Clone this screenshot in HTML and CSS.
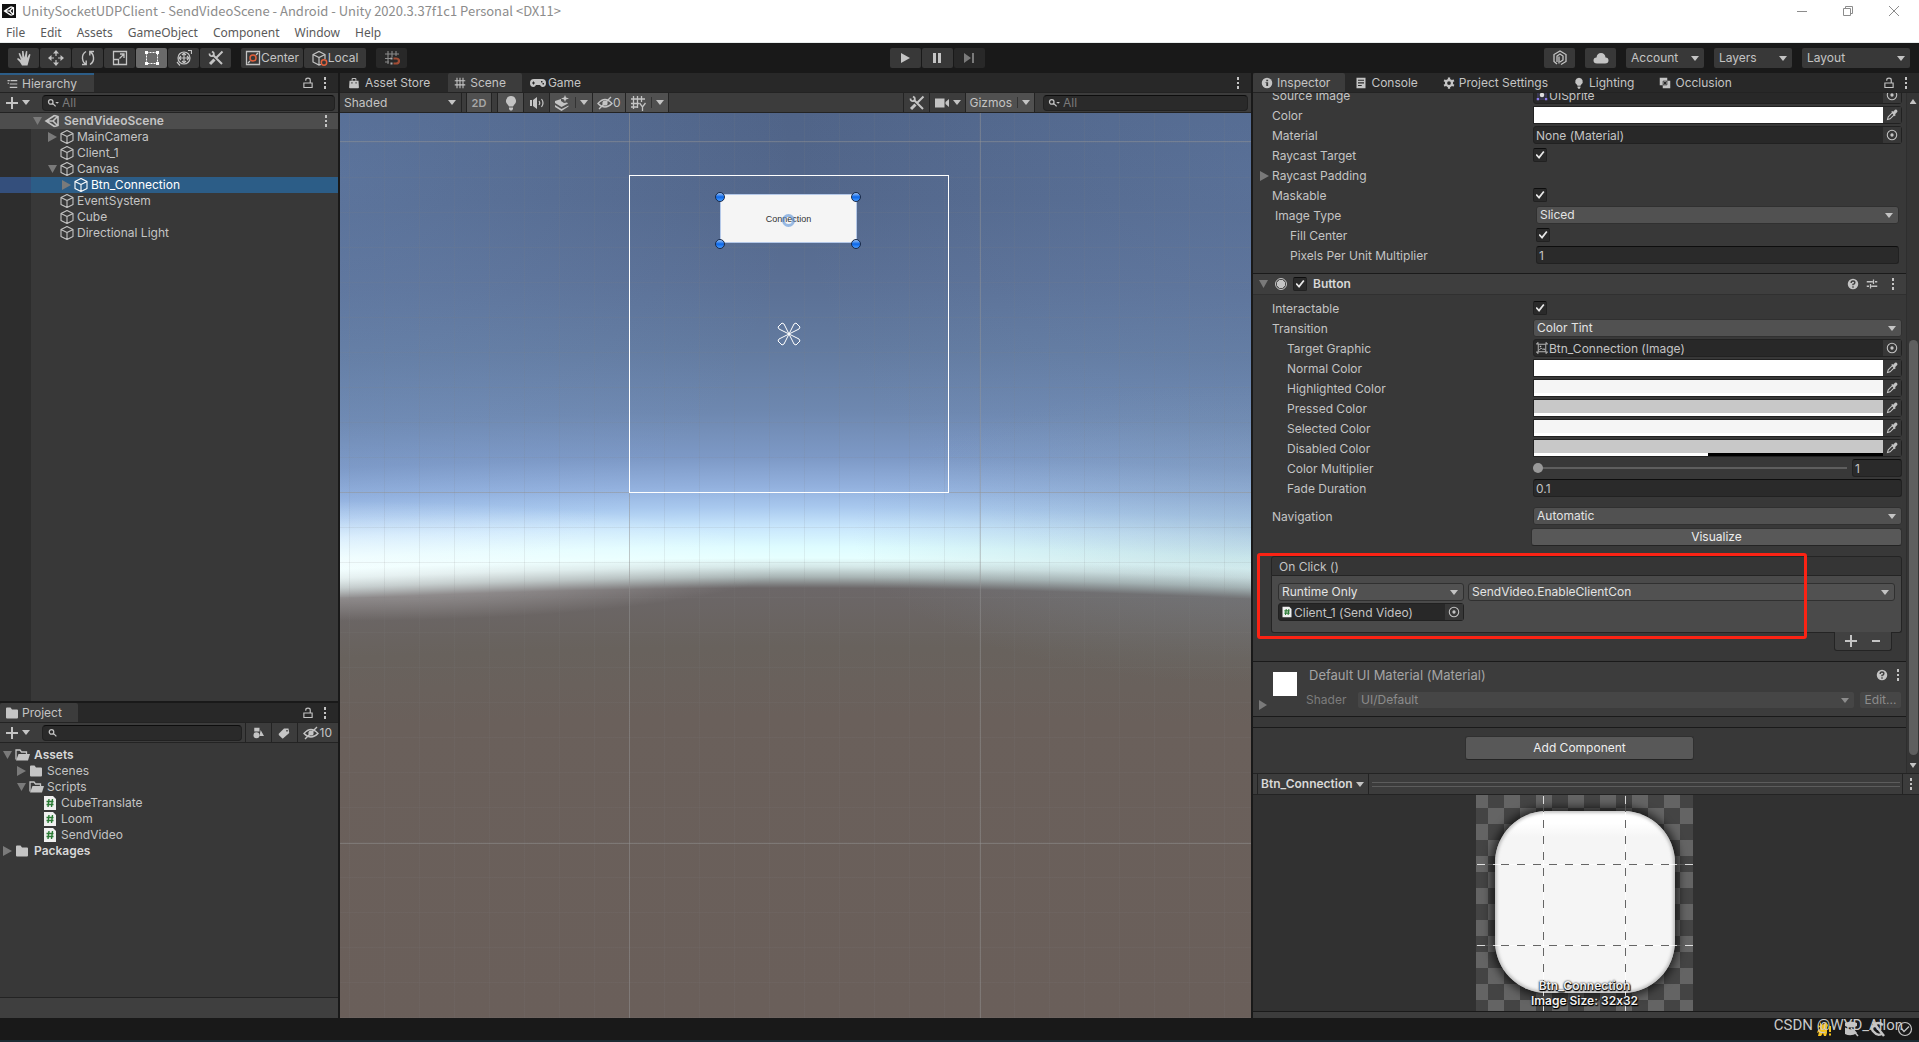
FILE: index.html
```
<!DOCTYPE html>
<html lang="en">

<head>
  <meta charset="UTF-8" />
  <meta name="viewport" content="width=device-width, initial-scale=1.0" />
  <title>UnitySocketUDPClient - SendVideoScene</title>
  <link rel="stylesheet" href="styles.css">
</head>

<body>

  <!-- Icon sheet -->
  <svg class="sheet" aria-hidden="true">
    <symbol id="i-unity" viewBox="0 0 16 16"><path fill="none" stroke="currentColor" stroke-width="1.600" d="M10.500 2.500L2 8l8.500 5.500M10.500 2.500L14 3.500v9l-3.500 1M2 8h7l4-4M9 8l4 4" /></symbol>
    <symbol id="i-cube" viewBox="0 0 16 16"><path fill="none" stroke="currentColor" stroke-width="1.100" stroke-linejoin="round" d="M8 1.500l6 3v7l-6 3-6-3v-7zM2 4.500l6 3 6-3M8 7.500v7" /></symbol>
    <symbol id="i-folder" viewBox="0 0 16 16"><path fill="currentColor" d="M2 3.500q0-1 1-1h3.500l1.500 2h5q1 0 1 1v7q0 1-1 1H3q-1 0-1-1z" /></symbol>
    <symbol id="i-open" viewBox="0 0 16 16"><path fill="none" stroke="currentColor" stroke-width="1.300" d="M2 12.500V3h4l1.500 2h5v2" /><path fill="currentColor" d="M4.500 7H16l-2 6.500H2z" /></symbol>
    <symbol id="i-script" viewBox="0 0 16 16"><path fill="#f0f0f0" d="M2 1h9l3 3v11H2z" /><path fill="none" stroke="#2a7a34" stroke-width="1.400" d="M7 4L6 12M10.500 4l-1 8M4.500 6.500h7M4.500 9.500h7" /></symbol>
    <symbol id="i-list" viewBox="0 0 16 16"><path fill="none" stroke="currentColor" stroke-width="1.400" d="M2 3.500h3M6 3.500h9M5 8h10M5 12.500h10M3 6v2" /></symbol>
    <symbol id="i-lock" viewBox="0 0 16 16"><path fill="none" stroke="currentColor" stroke-width="1.500" d="M2.500 8h11v6h-11zM5 5V4q0-2.500 3-2.500t3 2.500v4" /></symbol>
    <symbol id="i-dots" viewBox="0 0 16 16"><path fill="currentColor" d="M7 2h2v3H7zM7 7h2v2H7zM7 11h2v3H7z" /></symbol>
    <symbol id="i-plus" viewBox="0 0 16 16"><path fill="currentColor" d="M7 2h2v5h5v2H9v5H7V9H2V7h5z" /></symbol>
    <symbol id="i-minus" viewBox="0 0 16 16"><path fill="currentColor" d="M4 7h8v2H4z" /></symbol>
    <symbol id="i-search" viewBox="0 0 16 16"><path fill="none" stroke="currentColor" stroke-width="1.700" d="M9 6.500a3 3 0 1 1-6 0a3 3 0 1 1 6 0M8.500 8.500l4 4" /></symbol>
    <symbol id="i-search-menu" viewBox="0 0 16 16"><path fill="none" stroke="currentColor" stroke-width="1.700" d="M8 6.500a3 3 0 1 1-6 0a3 3 0 1 1 6 0M7.500 8.500l4 4" /><path fill="currentColor" d="M11 6.500h5L13.500 9z" /></symbol>
    <symbol id="i-bag" viewBox="0 0 16 16"><path fill="currentColor" d="M2 5h12l.5 9q0 1-1 1h-11q-1 0-1-1z" /><path fill="none" stroke="currentColor" stroke-width="1.300" d="M5.500 5V2h5v3" /><path fill="#282828" d="M4.500 7H6v1.500H4.500zM10 7h1.500v1.500H10z" /></symbol>
    <symbol id="i-hash" viewBox="0 0 16 16"><path fill="none" stroke="currentColor" stroke-width="1.400" d="M4 1v14M8 1v14M12 1v14M1 5h14M1 10.500h14" /></symbol>
    <symbol id="i-pad" viewBox="0 0 16 16"><path fill="currentColor" fill-rule="evenodd" d="M4 4h8q4 0 4 4t-3.500 4q-1.500 0-2.500-2H6q-1 2-2.500 2Q0 12 0 8t4-4zM3 6.500v1H2v1h1v1h1v-1h1v-1H4v-1zM11 6v1.500h1.500V6zM12.500 8v1.500H14V8z" /></symbol>
    <symbol id="i-bulb" viewBox="0 0 16 16"><path fill="currentColor" d="M8 1a5 5 0 0 1 3 9l-1 1.500H6L5 10a5 5 0 0 1 3-9zM6 12.500h4V14l-1 1.500H7L6 14z" /></symbol>
    <symbol id="i-sound" viewBox="0 0 16 16"><path fill="currentColor" d="M1 5h2v6H1zM4 5l4-3v12l-4-3z" /><path fill="none" stroke="currentColor" stroke-width="1.200" d="M10 6q1.500 2 0 4M12.500 4q3 4 0 8" /></symbol>
    <symbol id="i-fx" viewBox="0 0 16 16"><path fill="currentColor" d="M1 6l6-2v2l3 2 3-.5 1 1L7.500 12 1 8zM1 10l6.500 4 7-3.500v1L7.500 16 1 12zM11 0l1 2.500L15 3.500l-3 1L11 7l-1-2.500-3-1 3-1z" /></symbol>
    <symbol id="i-eye" viewBox="0 0 16 16"><path fill="none" stroke="currentColor" stroke-width="1.400" d="M1 8.500q7-8 14 0q-7 7-14 0zM2 14L14 2" /><circle cx="8" cy="8" r="2.600" fill="currentColor" /></symbol>
    <symbol id="i-gridy" viewBox="0 0 16 16"><path fill="none" stroke="currentColor" stroke-width="1.300" d="M3.500 1v13M7.500 1v12M11.500 1v6M1 4h14M1 8.500h8M1 12h6M9.500 8l3 4 3-4M12.500 12v4" /></symbol>
    <symbol id="i-tools" viewBox="0 0 16 16"><path fill="none" stroke="currentColor" stroke-width="2" d="M5 5l9 9M8.500 7.500L14.500 1.500" /><path fill="none" stroke="currentColor" stroke-width="1.800" d="M1.500 3.500q0 3 3 2.500 2-1 1-3.500L4 1.500" /><path fill="none" stroke="currentColor" stroke-width="3" d="M2 14l4.500-4.500" /></symbol>
    <symbol id="i-camera" viewBox="0 0 16 16"><path fill="currentColor" d="M1 3.500h9.500v9H1zM11.500 7l3.500-3v8l-3.500-3z" /></symbol>
    <symbol id="i-info" viewBox="0 0 16 16"><circle cx="8" cy="8" r="7" fill="currentColor" /><path fill="#3c3c3c" d="M7 3.500h2.500v2H7zM6 7h3.500v5H7V8H6z" /></symbol>
    <symbol id="i-console" viewBox="0 0 16 16"><path fill="currentColor" fill-rule="evenodd" d="M2 1h12v14H2zM4 3.500V5h8V3.500zM4 7v1.500h8V7zM4 10.500V12h5v-1.500z" /></symbol>
    <symbol id="i-gear" viewBox="0 0 16 16"><circle cx="8" cy="8" r="4" fill="none" stroke="currentColor" stroke-width="3" /><path stroke="currentColor" stroke-width="3" d="M8 .5v3M8 12.500v3M1.500 4.300l2.600 1.500M11.900 10.200l2.600 1.500M1.500 11.700l2.600-1.500M11.900 5.800l2.600-1.500" /></symbol>
    <symbol id="i-occl" viewBox="0 0 16 16"><path fill="currentColor" fill-rule="evenodd" d="M1 1h10v4h4v10H5v-4H1zM6.500 6.500v3h3v-3z" /><path fill="none" stroke="#282828" d="M5.500 11V5.500H11M5.500 10.500h5v-5" /></symbol>
    <symbol id="i-help" viewBox="0 0 16 16"><circle cx="8" cy="8" r="7" fill="currentColor" /><path fill="none" stroke="#3c3c3c" stroke-width="1.800" d="M5.500 6.500Q5.500 4 8 4t2.500 2.300Q10.500 8 8 8.500v1.300M8 11v2" /></symbol>
    <symbol id="i-preset" viewBox="0 0 16 16"><path fill="none" stroke="currentColor" stroke-width="1.700" d="M1 5h8M12 5h3M10 2v6M1 11h3M7 11h8M6 8v6" /></symbol>
    <symbol id="i-pick" viewBox="0 0 16 16"><circle cx="8" cy="8" r="6.300" fill="none" stroke="currentColor" stroke-width="1.400" /><circle cx="8" cy="8" r="2.200" fill="currentColor" /></symbol>
    <symbol id="i-dropper" viewBox="0 0 16 16"><path fill="none" stroke="currentColor" stroke-width="1.400" d="M2 14l1-3.500 5.500-5.500 2.500 2.500L5.500 13z" /><path fill="currentColor" d="M7 3.500l1.500-1 1 1L12 1q2-1 3 1t-1 3l-2 2 1 1-1.500 1.500z" /></symbol>
    <symbol id="i-sprite" viewBox="0 0 16 16"><rect x="2.500" y="2.500" width="11" height="11" fill="#30303c" stroke="#4c4a78" /><path fill="#8c7cf0" d="M1 1h3v3H1zM12 1h3v3h-3zM1 12h3v3H1zM12 12h3v3h-3z" /><circle cx="8" cy="8" r="3" fill="#ddd" /></symbol>
    <symbol id="i-image" viewBox="0 0 16 16"><path fill="none" stroke="currentColor" stroke-width="1.200" d="M3 3h10v10H3zM0 2.500h3M2.500 0v3M13 2.500h3M13.500 0v3M0 13.500h3M2.500 13v3M13 13.500h3M13.500 13v3M4 11l3-3 2 2 2-1 1 2" /><path fill="currentColor" d="M5 5h2v2H5z" /></symbol>
    <symbol id="i-hand" viewBox="0 0 16 16"><path fill="currentColor" d="M6 15.500Q5 12.500 1 9l1-1 3 2L2.500 3.500l1.500-.5 2.300 5L6 1h1.500l1 6.500L10 1l1.300.3L11 8l2.200-4 1.300.5L13 10l-1.500 5.500z" /></symbol>
    <symbol id="i-move" viewBox="0 0 16 16"><path fill="none" stroke="currentColor" stroke-width="1.200" d="M8 2v4M8 10v4M2 8h4M10 8h4" /><path fill="currentColor" d="M8 0l3 3.500H5zM8 16l3-3.500H5zM0 8l3.500-3v6zM16 8l-3.500-3v6z" /></symbol>
    <symbol id="i-rotate" viewBox="0 0 16 16"><path fill="none" stroke="currentColor" stroke-width="1.400" d="M6 1.500Q2 4 2.500 8.500T6 14M2 14.500h4.200V10.500M10 14.500q4-2.500 3.500-7T10 2M14 1.500H9.800v4" /></symbol>
    <symbol id="i-scale" viewBox="0 0 16 16"><path fill="none" stroke="currentColor" stroke-width="1.300" d="M1.500 1.500h13v13h-13zM1.500 9.500h5v5M7.500 8.500L12 4M8 4h4v4" /></symbol>
    <symbol id="i-rect" viewBox="0 0 16 16"><path fill="none" stroke="currentColor" stroke-dasharray="2 1" d="M2.500 2.500h11v11h-11z" /><path fill="currentColor" d="M1 1h3v3H1zM12 1h3v3h-3zM1 12h3v3H1zM12 12h3v3h-3z" /></symbol>
    <symbol id="i-transform" viewBox="0 0 16 16"><circle cx="8" cy="8" r="6" fill="none" stroke="currentColor" stroke-width="1.200" /><path fill="none" stroke="currentColor" stroke-width="1.200" d="M8 3v10M3 8h10M6 5l2-2 2 2M6 11l2 2 2-2M5 6L3 8l2 2M11 6l2 2-2 2M12 .5h3.500V4M1 12l3 3.500" /></symbol>
    <symbol id="i-center" viewBox="0 0 16 16"><path fill="none" stroke="currentColor" stroke-width="1.300" d="M1.500 1.500h13v13h-13zM3 13l2-2M11 5l2-2" /><circle cx="8" cy="8" r="3" fill="none" stroke="#e2613d" stroke-width="1.500" /></symbol>
    <symbol id="i-local" viewBox="0 0 16 16"><path fill="none" stroke="currentColor" stroke-width="1.200" d="M9 14.500L7 15l-6-3V4.500l6-3 6 3V9M1 4.500l6 3 6-3M7 7.500V15" /><circle cx="12" cy="12.500" r="2.700" fill="none" stroke="#e2613d" stroke-width="1.500" /></symbol>
    <symbol id="i-snap" viewBox="0 0 16 16"><path fill="none" stroke="#8a8a8a" stroke-width="1.100" d="M4 1v13M8 1v6M12 1v5M1 4h14M1 8.500h6M1 12h4" /><path fill="none" stroke="#a04c34" stroke-width="2.200" d="M9.500 8.500H12q3 0 3 2.500t-3 2.500H9.500" /><path fill="#aaa" d="M6.500 7.500h2v2h-2zM6.500 12.500h2v2h-2z" /></symbol>
    <symbol id="i-play" viewBox="0 0 16 16"><path fill="currentColor" d="M4 3l9 5-9 5z" /></symbol>
    <symbol id="i-pause" viewBox="0 0 16 16"><path fill="currentColor" d="M4 3h3v10H4zM9 3h3v10H9z" /></symbol>
    <symbol id="i-step" viewBox="0 0 16 16"><path fill="currentColor" d="M3 3l7 5-7 5zM11 3h2v10h-2z" /></symbol>
    <symbol id="i-collab" viewBox="0 0 16 16"><path fill="none" stroke="currentColor" stroke-width="1.300" d="M5 14l-3-2.500v-7L8 1l6 3.500v7L9 14.500M7 13.500v-7M5 12V6l3-2 3 2v4l-3 2" /></symbol>
    <symbol id="i-cloud" viewBox="0 0 16 16"><path fill="currentColor" d="M4 13.500q-3.500 0-3.500-3T3.500 7.500Q4 3 8 3t4.500 4.500q3 0 3 3t-3.500 3z" /></symbol>
    <symbol id="i-shapes" viewBox="0 0 16 16"><path fill="currentColor" d="M3 1h7v5H3zM11.500 4l4.500 8h-6z" /><circle cx="6" cy="11" r="4" fill="currentColor" /></symbol>
    <symbol id="i-tag" viewBox="0 0 16 16"><path fill="currentColor" fill-rule="evenodd" d="M1 9l7-7 6 0 1 6-8 7q-1 .5-1.500 0L1 10.500zM11 4v2h2V4z" /></symbol>
    <symbol id="i-bug" viewBox="0 0 16 16"><path fill="#f7c31e" d="M4 1l2 3 2-1 2-2 2 3-1 3v5l-1 3H8l-1-3-2 3H2l1-4-2 1 1-3 2-1V6L2 7V4l2 1zM13 5h2v6h-2zM13 12.500h2v2h-2z" /></symbol>
    <symbol id="i-cache" viewBox="0 0 16 16"><path fill="currentColor" d="M2 2q6-3 12 0v3Q8 8 2 5zM2 6.500q6 3 9 1.500l3 4q-6 4-12 1z" /><path stroke="currentColor" stroke-width="1.500" d="M8 7l7 8" /></symbol>
    <symbol id="i-bake" viewBox="0 0 16 16"><path fill="none" stroke="currentColor" stroke-width="2.500" d="M13 4Q8 0 4 4t0 7q4 5 9 1M3 1l11 14" /></symbol>
    <symbol id="i-done" viewBox="0 0 16 16"><circle cx="8" cy="8" r="6.500" fill="none" stroke="currentColor" stroke-width="1.200" /><path fill="none" stroke="currentColor" stroke-width="1.300" d="M4.500 7.500L7 10.500 12 5.500" /></symbol>
    <symbol id="i-min" viewBox="0 0 12 12"><path stroke="currentColor" d="M1 6.500h10" /></symbol>
    <symbol id="i-restore" viewBox="0 0 12 12"><path fill="none" stroke="currentColor" d="M1.500 3.500h7v7h-7zM3.500 3.500v-2h7v7h-2" /></symbol>
    <symbol id="i-close" viewBox="0 0 12 12"><path stroke="currentColor" d="M1 1l10 10M11 1L1 11" /></symbol>
  </svg>

  <header class="titlebar">
    <span class="app-icon"><svg class="icon small"><use href="#i-unity" /></svg></span>
    <h1>UnitySocketUDPClient - SendVideoScene - Android - Unity 2020.3.37f1c1 Personal &lt;DX11&gt;</h1>
    <div class="window-buttons">
      <button aria-label="Minimize"><svg><use href="#i-min" /></svg></button>
      <button aria-label="Restore"><svg><use href="#i-restore" /></svg></button>
      <button aria-label="Close"><svg><use href="#i-close" /></svg></button>
    </div>
  </header>

  <nav class="menubar">
    <a href="#">File</a>
    <a href="#">Edit</a>
    <a href="#">Assets</a>
    <a href="#">GameObject</a>
    <a href="#">Component</a>
    <a href="#">Window</a>
    <a href="#">Help</a>
  </nav>

  <div class="toolbar">
    <div class="toolbar-side">
      <div class="btn-group">
        <button class="tool" aria-label="Hand"><svg class="icon"><use href="#i-hand" /></svg></button>
        <button class="tool" aria-label="Move"><svg class="icon"><use href="#i-move" /></svg></button>
        <button class="tool" aria-label="Rotate"><svg class="icon"><use href="#i-rotate" /></svg></button>
        <button class="tool" aria-label="Scale"><svg class="icon"><use href="#i-scale" /></svg></button>
        <button class="tool active" aria-label="Rect"><svg class="icon"><use href="#i-rect" /></svg></button>
        <button class="tool" aria-label="Transform"><svg class="icon"><use href="#i-transform" /></svg></button>
        <button class="tool" aria-label="Custom tools"><svg class="icon"><use href="#i-tools" /></svg></button>
      </div>
      <div class="btn-group">
        <button class="tool wide"><svg class="icon"><use href="#i-center" /></svg>Center</button>
        <button class="tool wide"><svg class="icon"><use href="#i-local" /></svg>Local</button>
      </div>
      <button class="tool off" aria-label="Grid snapping" disabled><svg class="icon"><use href="#i-snap" /></svg></button>
    </div>
    <div class="btn-group play-controls">
      <button class="tool" aria-label="Play"><svg class="icon"><use href="#i-play" /></svg></button>
      <button class="tool" aria-label="Pause"><svg class="icon"><use href="#i-pause" /></svg></button>
      <button class="tool off" aria-label="Step" disabled><svg class="icon"><use href="#i-step" /></svg></button>
    </div>
    <div class="toolbar-side end">
      <button class="tool" aria-label="Collaborate"><svg class="icon"><use href="#i-collab" /></svg></button>
      <button class="tool" aria-label="Cloud"><svg class="icon"><use href="#i-cloud" /></svg></button>
      <button class="menu-btn">Account</button>
      <button class="menu-btn">Layers</button>
      <button class="menu-btn layout">Layout</button>
    </div>
  </div>

  <main>
    <div class="left-column">
      <section class="panel hierarchy">
        <div class="tabs">
          <button class="tab current focused"><svg class="icon small"><use href="#i-list" /></svg>Hierarchy</button>
          <div class="tab-tools">
            <button aria-label="Lock"><svg class="icon small"><use href="#i-lock" /></svg></button>
            <button aria-label="More"><svg class="icon"><use href="#i-dots" /></svg></button>
          </div>
        </div>
        <div class="strip">
          <button class="add" aria-label="Create"><svg class="icon"><use href="#i-plus" /></svg></button>
          <div class="search">
            <svg class="icon small"><use href="#i-search-menu" /></svg>
            <input type="text" placeholder="All" aria-label="Search hierarchy" />
          </div>
        </div>
        <ul class="tree scene-tree">
          <li class="scene-row"><i class="fold open"></i><svg class="icon"><use href="#i-unity" /></svg><b>SendVideoScene</b><svg class="icon"><use href="#i-dots" /></svg></li>
          <li class="d1"><i class="fold"></i><svg class="icon"><use href="#i-cube" /></svg>MainCamera</li>
          <li class="d1"><i class="fold none"></i><svg class="icon"><use href="#i-cube" /></svg>Client_1</li>
          <li class="d1"><i class="fold open"></i><svg class="icon"><use href="#i-cube" /></svg>Canvas</li>
          <li class="d2 selected"><i class="fold"></i><svg class="icon"><use href="#i-cube" /></svg>Btn_Connection</li>
          <li class="d1"><i class="fold none"></i><svg class="icon"><use href="#i-cube" /></svg>EventSystem</li>
          <li class="d1"><i class="fold none"></i><svg class="icon"><use href="#i-cube" /></svg>Cube</li>
          <li class="d1"><i class="fold none"></i><svg class="icon"><use href="#i-cube" /></svg>Directional Light</li>
        </ul>
      </section>

      <section class="panel project">
        <div class="tabs">
          <button class="tab current"><svg class="icon"><use href="#i-folder" /></svg>Project</button>
          <div class="tab-tools">
            <button aria-label="Lock"><svg class="icon small"><use href="#i-lock" /></svg></button>
            <button aria-label="More"><svg class="icon"><use href="#i-dots" /></svg></button>
          </div>
        </div>
        <div class="strip">
          <button class="add" aria-label="Create"><svg class="icon"><use href="#i-plus" /></svg></button>
          <div class="search">
            <svg class="icon small"><use href="#i-search" /></svg>
            <input type="text" aria-label="Search project" />
          </div>
          <button class="strip-btn" aria-label="Filter by type"><svg class="icon small"><use href="#i-shapes" /></svg></button>
          <button class="strip-btn" aria-label="Filter by label"><svg class="icon small"><use href="#i-tag" /></svg></button>
          <button class="strip-btn hidden-count"><svg class="icon"><use href="#i-eye" /></svg>10</button>
        </div>
        <ul class="tree asset-tree">
          <li><i class="fold open"></i><svg class="icon"><use href="#i-open" /></svg><b>Assets</b></li>
          <li class="d1"><i class="fold"></i><svg class="icon"><use href="#i-folder" /></svg>Scenes</li>
          <li class="d1"><i class="fold open"></i><svg class="icon"><use href="#i-open" /></svg>Scripts</li>
          <li class="d2"><i class="fold none"></i><svg class="icon"><use href="#i-script" /></svg>CubeTranslate</li>
          <li class="d2"><i class="fold none"></i><svg class="icon"><use href="#i-script" /></svg>Loom</li>
          <li class="d2"><i class="fold none"></i><svg class="icon"><use href="#i-script" /></svg>SendVideo</li>
          <li><i class="fold"></i><svg class="icon"><use href="#i-folder" /></svg><b>Packages</b></li>
        </ul>
        <div class="project-footer"></div>
      </section>
    </div>

    <section class="panel scene">
      <div class="tabs">
        <button class="tab store"><svg class="icon small"><use href="#i-bag" /></svg>Asset Store</button>
        <button class="tab current scene-tab"><svg class="icon small"><use href="#i-hash" /></svg>Scene</button>
        <button class="tab game-tab"><svg class="icon"><use href="#i-pad" /></svg>Game</button>
        <div class="tab-tools">
          <button aria-label="More"><svg class="icon"><use href="#i-dots" /></svg></button>
        </div>
      </div>
      <div class="strip scene-strip">
        <div class="strip-items">
          <button class="shading">Shaded</button>
          <button class="strip-btn on mode">2D</button>
          <button class="strip-btn on" aria-label="Lighting"><svg class="icon"><use href="#i-bulb" /></svg></button>
          <button class="strip-btn" aria-label="Audio"><svg class="icon"><use href="#i-sound" /></svg></button>
          <button class="strip-btn on split" aria-label="Effects"><svg class="icon"><use href="#i-fx" /></svg></button>
          <button class="strip-btn on eye"><svg class="icon"><use href="#i-eye" /></svg>0</button>
          <button class="strip-btn on split" aria-label="Grid"><svg class="icon"><use href="#i-gridy" /></svg></button>
        </div>
        <div class="strip-items right">
          <button class="strip-btn" aria-label="Tools"><svg class="icon"><use href="#i-tools" /></svg></button>
          <button class="strip-btn drop" aria-label="Camera"><svg class="icon"><use href="#i-camera" /></svg></button>
          <button class="strip-btn on split gizmos">Gizmos</button>
          <div class="search">
            <svg class="icon small"><use href="#i-search-menu" /></svg>
            <input type="text" placeholder="All" aria-label="Search scene" />
          </div>
        </div>
      </div>
      <div class="viewport">
        <div class="grid"></div>
        <div class="canvas-frame">
          <button class="ui-button">Connection</button>
          <span class="handle nw"></span>
          <span class="handle ne"></span>
          <span class="handle sw"></span>
          <span class="handle se"></span>
          <span class="pivot"></span>
          <svg class="gizmo" viewBox="-12 -12 24 24"><path fill="none" stroke="#fff" d="M0 0L-5-10l-2-1-4 4 1 2zM0 0L5-10l2-1 4 4-1 2zM0 0L5 10l2 1 4-4-1-2zM0 0L-5 10l-2 1-4-4 1-2z" /></svg>
        </div>
      </div>
    </section>

    <section class="panel inspector">
      <div class="tabs">
        <button class="tab current"><svg class="icon small"><use href="#i-info" /></svg>Inspector</button>
        <button class="tab"><svg class="icon small"><use href="#i-console" /></svg>Console</button>
        <button class="tab"><svg class="icon small"><use href="#i-gear" /></svg>Project Settings</button>
        <button class="tab"><svg class="icon small"><use href="#i-bulb" /></svg>Lighting</button>
        <button class="tab"><svg class="icon small"><use href="#i-occl" /></svg>Occlusion</button>
        <div class="tab-tools">
          <button aria-label="Lock"><svg class="icon small"><use href="#i-lock" /></svg></button>
          <button aria-label="More"><svg class="icon"><use href="#i-dots" /></svg></button>
        </div>
      </div>

      <div class="scroll-area">
        <div class="components">
          <div class="props first">
            <div class="prop">
              <label for="source">Source Image</label>
              <div class="object-field"><svg class="icon small"><use href="#i-sprite" /></svg><input id="source" type="text" value="UISprite" readonly /><button aria-label="Pick"><svg class="icon small"><use href="#i-pick" /></svg></button></div>
            </div>
            <div class="prop">
              <label for="color">Color</label>
              <div class="color-field"><div class="swatch"><input id="color" type="color" value="#ffffff" /></div><button aria-label="Eyedropper"><svg class="icon small"><use href="#i-dropper" /></svg></button></div>
            </div>
            <div class="prop">
              <label for="material">Material</label>
              <div class="object-field"><input id="material" type="text" value="None (Material)" readonly /><button aria-label="Pick"><svg class="icon small"><use href="#i-pick" /></svg></button></div>
            </div>
            <div class="prop"><label for="raycast">Raycast Target</label><input id="raycast" type="checkbox" checked /></div>
            <div class="prop folded"><i class="fold"></i><span>Raycast Padding</span></div>
            <div class="prop"><label for="maskable">Maskable</label><input id="maskable" type="checkbox" checked /></div>
            <div class="prop inset">
              <label for="imageType">Image Type</label>
              <div class="select"><select id="imageType"><option>Sliced</option></select></div>
            </div>
            <div class="prop inset sub"><label for="fill">Fill Center</label><input id="fill" type="checkbox" checked /></div>
            <div class="prop inset sub"><label for="ppu">Pixels Per Unit Multiplier</label><input id="ppu" class="text" type="text" value="1" /></div>
          </div>

          <div class="component-head">
            <i class="fold open"></i>
            <span class="radio-icon"></span>
            <input id="enabled" type="checkbox" checked />
            <label for="enabled">Button</label>
            <div class="head-tools">
              <button aria-label="Help"><svg class="icon small"><use href="#i-help" /></svg></button>
              <button aria-label="Presets"><svg class="icon small"><use href="#i-preset" /></svg></button>
              <button aria-label="More"><svg class="icon"><use href="#i-dots" /></svg></button>
            </div>
          </div>

          <div class="props button-props">
            <div class="prop"><label for="interactable">Interactable</label><input id="interactable" type="checkbox" checked /></div>
            <div class="prop">
              <label for="transition">Transition</label>
              <div class="select"><select id="transition"><option>Color Tint</option></select></div>
            </div>
            <div class="prop sub">
              <label for="target">Target Graphic</label>
              <div class="object-field"><svg class="icon small"><use href="#i-image" /></svg><input id="target" type="text" value="Btn_Connection (Image)" readonly /><button aria-label="Pick"><svg class="icon small"><use href="#i-pick" /></svg></button></div>
            </div>
            <div class="prop sub">
              <label for="normal">Normal Color</label>
              <div class="color-field"><div class="swatch"><input id="normal" type="color" value="#ffffff" /></div><button aria-label="Eyedropper"><svg class="icon small"><use href="#i-dropper" /></svg></button></div>
            </div>
            <div class="prop sub">
              <label for="highlighted">Highlighted Color</label>
              <div class="color-field"><div class="swatch"><input id="highlighted" type="color" value="#f5f5f5" /></div><button aria-label="Eyedropper"><svg class="icon small"><use href="#i-dropper" /></svg></button></div>
            </div>
            <div class="prop sub">
              <label for="pressed">Pressed Color</label>
              <div class="color-field"><div class="swatch"><input id="pressed" type="color" value="#c8c8c8" /></div><button aria-label="Eyedropper"><svg class="icon small"><use href="#i-dropper" /></svg></button></div>
            </div>
            <div class="prop sub">
              <label for="selectedColor">Selected Color</label>
              <div class="color-field"><div class="swatch"><input id="selectedColor" type="color" value="#f5f5f5" /></div><button aria-label="Eyedropper"><svg class="icon small"><use href="#i-dropper" /></svg></button></div>
            </div>
            <div class="prop sub">
              <label for="disabledColor">Disabled Color</label>
              <div class="color-field"><div class="swatch half"><input id="disabledColor" type="color" value="#c8c8c8" /></div><button aria-label="Eyedropper"><svg class="icon small"><use href="#i-dropper" /></svg></button></div>
            </div>
            <div class="prop sub">
              <label for="multiplier">Color Multiplier</label>
              <div class="slider-field"><input id="multiplier" type="range" min="1" max="5" value="1" /><input class="text" type="text" value="1" aria-label="Color multiplier value" /></div>
            </div>
            <div class="prop sub"><label for="fade">Fade Duration</label><input id="fade" class="text" type="text" value="0.1" /></div>
            <div class="prop spaced">
              <label for="navigation">Navigation</label>
              <div class="select"><select id="navigation"><option>Automatic</option></select></div>
            </div>
            <button class="push visualize">Visualize</button>
          </div>

          <div class="event">
            <div class="event-head">On Click ()</div>
            <div class="event-body">
              <div class="select"><select aria-label="Call state"><option>Runtime Only</option></select></div>
              <div class="select"><select aria-label="Function"><option>SendVideo.EnableClientCon</option></select></div>
              <div class="object-field"><svg class="icon small"><use href="#i-script" /></svg><input type="text" value="Client_1 (Send Video)" aria-label="Target object" readonly /><button aria-label="Pick"><svg class="icon small"><use href="#i-pick" /></svg></button></div>
            </div>
            <div class="event-foot">
              <button aria-label="Add"><svg class="icon"><use href="#i-plus" /></svg></button>
              <button aria-label="Remove"><svg class="icon"><use href="#i-minus" /></svg></button>
            </div>
            <div class="marker"></div>
          </div>

          <div class="material">
            <i class="fold"></i>
            <span class="material-thumb"></span>
            <div class="material-info">
              <div class="material-title">
                <span>Default UI Material (Material)</span>
                <button aria-label="Help"><svg class="icon small"><use href="#i-help" /></svg></button>
                <button aria-label="More"><svg class="icon"><use href="#i-dots" /></svg></button>
              </div>
              <div class="shader">
                <label for="shader">Shader</label>
                <div class="select"><select id="shader" disabled><option>UI/Default</option></select></div>
                <button class="push" disabled>Edit...</button>
              </div>
            </div>
          </div>
          <div class="gap-line"></div>
          <button class="push add-component">Add Component</button>
        </div>
        <div class="scrollbar"><i class="up"></i><span></span><i class="down"></i></div>
      </div>

      <div class="preview-bar">
        <button class="preview-name">Btn_Connection</button>
        <span class="drag"></span>
        <button class="preview-more" aria-label="More"><svg class="icon"><use href="#i-dots" /></svg></button>
      </div>
      <div class="preview">
        <div class="texture">
          <div class="sprite"></div>
          <svg class="borders" viewBox="0 0 217 216">
            <path stroke="#fff" stroke-opacity=".8" d="M67.500 0v216M149.500 0v216M0 69.500h217M0 150.500h217" />
            <path stroke="#000" stroke-opacity=".6" stroke-dasharray="8 8" stroke-dashoffset="-9" d="M67.500 0v216M149.500 0v216M0 69.500h217M0 150.500h217" />
          </svg>
          <p>Btn_Connection<br>Image Size: 32x32</p>
        </div>
      </div>
      <div class="preview-foot"></div>
    </section>
  </main>

  <footer class="statusbar">
    <svg class="icon"><use href="#i-bug" /></svg>
    <svg class="icon"><use href="#i-cache" /></svg>
    <svg class="icon"><use href="#i-bake" /></svg>
    <svg class="icon"><use href="#i-done" /></svg>
    <span class="watermark">CSDN @WYD_Allon</span>
  </footer>

</body>

</html>
```

FILE: styles.css
```
* {
  box-sizing: border-box;
}

body {
  font-family: 'Inter', sans-serif;
  font-size: 12px;
  line-height: 16px;
  font-feature-settings: "calt" 0;
  margin: 0;
  height: 100vh;
  display: flex;
  flex-direction: column;
  overflow: hidden;
  background: #191919;
  color: #c4c4c4;
}

button,
input,
select {
  font: inherit;
  color: inherit;
  margin: 0;
  padding: 0;
  border: none;
  background: none;
  border-radius: 0;
  outline: none;
  min-width: 0;
}

button {
  display: flex;
  align-items: center;
  justify-content: center;
}

.sheet {
  display: none;
}

.icon {
  width: 16px;
  height: 16px;
  flex: none;
}

.icon.small {
  width: 12px;
  height: 12px;
}

/* Window frame */
.titlebar {
  display: flex;
  align-items: center;
  height: 22px;
  padding-left: 2px;
  background: #fff;
  color: #8c8c8c;
}

.app-icon {
  display: flex;
  align-items: center;
  justify-content: center;
  width: 14px;
  height: 14px;
  margin-right: 6px;
  background: #111;
  color: #fff;
}

.titlebar h1 {
  flex: 1;
  margin: 0;
  font-family: 'Noto Sans CJK SC', sans-serif;
  font-size: 13px;
  font-weight: 400;
}

.window-buttons {
  display: flex;
  gap: 34px;
  padding-right: 19px;
}

.window-buttons svg {
  width: 12px;
  height: 12px;
}

.menubar {
  display: flex;
  gap: 15px;
  height: 21px;
  padding: 3px 6px 0;
  background: #fff;
  border-bottom: 1px solid #e8ecec;
  font-family: 'Noto Sans', sans-serif;
}

.menubar a {
  color: #5a5a5a;
  text-decoration: none;
}

/* Main toolbar */
.toolbar {
  display: flex;
  align-items: center;
  height: 30px;
  padding: 0 9px 0 8px;
}

.toolbar-side {
  flex: 1;
  display: flex;
  gap: 10px;
}

.toolbar-side.end {
  justify-content: flex-end;
}

.btn-group {
  display: flex;
  gap: 1px;
}

.play-controls {
  margin-right: 44px;
}

.tool {
  width: 31px;
  height: 20px;
  background: #383838;
  border-radius: 2px;
}

.tool.active {
  background: #6a6a6a;
  color: #fff;
}

.tool.off {
  background: #282828;
  color: #7a7a7a;
}

.tool.wide {
  width: 62px;
}

.menu-btn {
  width: 78px;
  height: 20px;
  padding: 0 5px;
  justify-content: space-between;
  background: #383838;
  border-radius: 2px;
}

.menu-btn.layout {
  width: 108px;
}

.menu-btn::after,
.add::after,
.shading::after,
.split::after,
.drop::after,
.select::after,
.preview-name::after {
  content: '';
  border: 4px solid transparent;
  border-top: 5px solid #c4c4c4;
  border-bottom: none;
}

/* Docked panels */
main {
  flex: 1;
  min-height: 0;
  display: grid;
  grid-template-columns: 338px 1fr 666px;
  gap: 2px;
}

.left-column {
  display: flex;
  flex-direction: column;
  gap: 2px;
  min-height: 0;
}

.panel {
  display: flex;
  flex-direction: column;
  min-height: 0;
  background: #383838;
}

.hierarchy {
  flex: 628;
}

.project {
  flex: 315;
}

.tabs {
  display: flex;
  height: 19px;
  background: #282828;
}

.tab {
  gap: 5px;
  padding: 0 16px 0 8px;
}

.tab.current {
  background: #3c3c3c;
  border-radius: 2px 2px 0 0;
}

.tab.focused {
  border-top: 2px solid #2c5d87;
  border-radius: 0;
  gap: 4px;
  padding-left: 6px;
  padding-right: 17px;
}

.project .tab {
  gap: 2px;
  padding-left: 4px;
}

.tab.store {
  padding-right: 18px;
}

.tab.scene-tab {
  gap: 4px;
  padding-left: 6px;
}

.tab.game-tab {
  gap: 2px;
}

.inspector .tab {
  gap: 4px;
  padding-right: 15px;
}

.inspector .tab + .tab {
  padding-left: 10px;
}

.tab-tools {
  display: flex;
  gap: 3px;
  margin-left: auto;
  padding-right: 5px;
}

.strip {
  display: flex;
  align-items: center;
  height: 21px;
  background: #3c3c3c;
  border-top: 1px solid #232323;
  border-bottom: 1px solid #232323;
}

.add {
  gap: 2px;
  padding-left: 4px;
  margin-right: 12px;
}

.search {
  flex: 1;
  display: flex;
  align-items: center;
  height: 16px;
  margin-right: 3px;
  padding-left: 4px;
  gap: 3px;
  background: #2a2a2a;
  border: 1px solid #212121;
  border-top-color: #0d0d0d;
  border-radius: 4px;
}

.search input {
  width: 100%;
  height: 14px;
}

.search input::placeholder {
  color: #7a7a7a;
  opacity: 1;
}

.strip-btn {
  height: 19px;
  min-width: 26px;
  border-left: 1px solid #232323;
}

.strip-btn.on {
  background-color: #505050;
}

.hidden-count {
  gap: 1px;
  padding: 0 6px 0 5px;
}

/* Trees */
.tree {
  list-style: none;
  margin: 0;
  padding: 0;
  flex: 1;
}

.tree li {
  display: flex;
  align-items: center;
  height: 16px;
}

.tree .icon {
  margin: 0 2px;
}

.fold {
  flex: none;
  width: 9px;
  height: 10px;
  background: #7a7a7a;
  clip-path: polygon(0 0, 100% 50%, 0 100%);
}

.fold.open {
  height: 8px;
  clip-path: polygon(0 0, 100% 0, 50% 100%);
}

.fold.none {
  background: none;
}

.scene-tree {
  background: linear-gradient(to right, #2d2d2d 31px, #383838 31px);
}

.scene-tree li {
  padding-left: 33px;
}

.scene-tree .d1 {
  padding-left: 48px;
}

.scene-tree .d2 {
  padding-left: 62px;
}

.scene-tree .scene-row {
  padding-right: 2px;
  background: #4d4d4d;
}

.scene-row b {
  flex: 1;
  margin-left: 2px;
  font-weight: 600;
}

.scene-tree .selected {
  background: linear-gradient(to right, #344f7c 31px, #2c5d87 31px);
  color: #fff;
}

.asset-tree {
  padding-top: 4px;
}

.asset-tree li {
  padding-left: 3px;
}

.asset-tree .d1 {
  padding-left: 17px;
}

.asset-tree .d2 {
  padding-left: 31px;
}

.asset-tree .icon {
  margin-right: 3px;
}

.asset-tree b {
  margin-left: 1px;
  color: #d8d8d8;
  font-weight: 600;
}

.project-footer {
  height: 21px;
  background: #3f3f3f;
  border-top: 1px solid #232323;
}

/* Scene view */
.scene-strip {
  justify-content: space-between;
}

.strip-items {
  display: flex;
  align-items: center;
}

.shading {
  width: 122px;
  height: 19px;
  margin-right: 4px;
  padding: 0 5px 0 4px;
  justify-content: space-between;
  border-right: 1px solid #232323;
}

.mode {
  margin-right: 5px;
  border-right: 1px solid #232323;
  font-weight: 600;
  font-size: 11px;
  color: #a8a8a8;
}

.split,
.drop {
  gap: 3px;
  padding: 0 4px;
}

.split {
  background-image: linear-gradient(#333, #333);
  background-size: 1px 11px;
  background-position: right 16px center;
  background-repeat: no-repeat;
}

.split::after {
  margin-left: 7px;
}

.gizmos {
  padding-left: 3px;
}

.eye {
  padding: 0 4px 0 4px;
}

.strip-items .search {
  flex: none;
  width: 205px;
  margin-left: 8px;
}

.scene .strip-items .split:last-child,
.gizmos {
  border-right: 1px solid #232323;
}

.viewport {
  position: relative;
  flex: 1;
  overflow: hidden;
  background:
    radial-gradient(ellipse 450px 60px at 0 448px, rgba(255, 255, 255, 0.6), transparent),
    radial-gradient(ellipse 400px 150px at 100% 420px, rgba(140, 165, 175, 0.3), transparent),
    radial-gradient(ellipse 455px 430px at 0 60px, rgba(130, 170, 225, 0.2), transparent),
    radial-gradient(ellipse 455px 430px at 100% 60px, rgba(130, 170, 225, 0.15), transparent),
    radial-gradient(circle 9884px at 50% 9884px,
      #6a5f5a 8979px, #6a605b 9280px, #68625d 9350px, #6c6768 9409px,
      #7b7b7c 9412px, #a8b4b4 9420px, #d3e6e6 9430px, #e6ffff 9439px, #defcff 9450px,
      #c8e6fc 9470px, #a8c8ee 9490px, #93b1de 9510px, #7d99c6 9540px, #6e88b0 9585px,
      #627a9f 9650px, #5a6f94 9720px, #53678b 9800px, #506488 9884px);
}

.grid {
  position: absolute;
  inset: 0;
  background-image:
    linear-gradient(to right, rgba(150, 150, 150, 0.45) 1px, transparent 1px),
    linear-gradient(rgba(150, 150, 150, 0.45) 1px, transparent 1px),
    linear-gradient(to right, rgba(130, 130, 130, 0.12) 1px, transparent 1px),
    linear-gradient(rgba(130, 130, 130, 0.12) 1px, transparent 1px);
  background-size: 351px 351px, 351px 351px, 35px 35px, 35px 35px;
  background-position: 289px 379px, 289px 379px, 289px 379px, 289px 379px;
}

/* Objects placed on the scene canvas */
.canvas-frame {
  position: absolute;
  left: 289px;
  top: 62px;
  width: 320px;
  height: 318px;
  border: 1px solid #fff;
}

.ui-button {
  position: absolute;
  left: 90px;
  top: 18px;
  width: 137px;
  height: 49px;
  background: #f5f5f5;
  border: 1px solid #b4c8e8;
  color: #323232;
  font-family: 'Liberation Sans', sans-serif;
  font-size: 9px;
}

.handle {
  position: absolute;
  width: 10px;
  height: 10px;
  border: 1px solid #16294a;
  border-radius: 50%;
  background: linear-gradient(#9cc4f8, #0a66e8 50%, #4a9cff);
}

.handle.nw,
.handle.ne {
  top: 16px;
}

.handle.sw,
.handle.se {
  top: 63px;
}

.handle.nw,
.handle.sw {
  left: 85px;
}

.handle.ne,
.handle.se {
  left: 221px;
}

.pivot {
  position: absolute;
  left: 152px;
  top: 38px;
  width: 13px;
  height: 13px;
  border: 3px solid rgba(90, 145, 215, 0.6);
  border-radius: 50%;
}

.gizmo {
  position: absolute;
  left: 147px;
  top: 146px;
  width: 24px;
  height: 24px;
}

/* Inspector */
.scroll-area {
  flex: 1;
  min-height: 0;
  display: flex;
  overflow: hidden;
  border-top: 1px solid #232323;
}

.components {
  flex: 1;
  min-width: 0;
}

.props {
  padding: 0 4px 0 19px;
}

.props.first {
  margin-top: -7px;
  padding-bottom: 7px;
}

.prop {
  display: flex;
  align-items: flex-start;
  height: 20px;
}

.prop > label {
  flex: none;
  width: 261px;
  line-height: 20px;
}

.prop.sub > label {
  padding-left: 15px;
}

.prop.inset {
  margin: 0 3px;
}

.prop.spaced {
  margin-top: 8px;
}

.prop.folded {
  align-items: center;
  margin-left: -12px;
  gap: 3px;
}

.object-field,
.color-field,
.text,
.select {
  flex: 1;
  height: 18px;
  border: 1px solid #212121;
  border-radius: 3px;
}

.object-field {
  display: flex;
  align-items: center;
  gap: 1px;
  padding-left: 2px;
  background: #282828;
}

.object-field input {
  flex: 1;
  height: 16px;
  padding-top: 1px;
}

.object-field button,
.color-field button {
  width: 18px;
  height: 16px;
  background: #373737;
}

.color-field {
  display: flex;
  border-radius: 0 3px 3px 0;
}

.swatch {
  flex: 1;
  padding-bottom: 3px;
  background: #fff;
}

.swatch.half {
  background: linear-gradient(to right, #fff 50%, #000 50%);
}

.swatch input {
  display: block;
  width: 100%;
  height: 13px;
  appearance: none;
}

.swatch input::-webkit-color-swatch-wrapper {
  padding: 0;
}

.swatch input::-webkit-color-swatch {
  border: none;
  border-radius: 0;
}

.text {
  padding: 0 2px;
  background: #2a2a2a;
  border-top-color: #0d0d0d;
}

.select {
  display: grid;
  align-items: center;
  background: #515151;
  border-color: #303030;
}

.select select {
  grid-area: 1 / 1;
  width: 100%;
  height: 16px;
  padding-left: 3px;
  appearance: none;
  color: #e4e4e4;
}

.select::after {
  grid-area: 1 / 1;
  justify-self: end;
  margin-right: 5px;
  pointer-events: none;
}

input[type="checkbox"] {
  appearance: none;
  display: grid;
  place-items: center;
  width: 14px;
  height: 14px;
  margin-top: 2px;
  background: #2a2a2a;
  border: 1px solid #212121;
  border-top-color: #0d0d0d;
  border-radius: 2px;
}

input[type="checkbox"]:checked::before {
  content: '';
  width: 9px;
  height: 8px;
  background: #e8e8e8;
  clip-path: polygon(0 50%, 15% 38%, 38% 65%, 85% 0, 100% 12%, 40% 100%);
}

.slider-field {
  flex: 1;
  display: flex;
  gap: 5px;
}

.slider-field input[type="range"] {
  flex: 1;
  height: 18px;
  appearance: none;
}

.slider-field input::-webkit-slider-runnable-track {
  height: 2px;
  background: #5e5e5e;
}

.slider-field input::-webkit-slider-thumb {
  appearance: none;
  width: 10px;
  height: 10px;
  margin-top: -4px;
  border-radius: 50%;
  background: #999;
}

.slider-field .text {
  flex: none;
  width: 50px;
}

.component-head {
  display: flex;
  align-items: center;
  height: 22px;
  padding: 0 5px 0 6px;
  background: #3e3e3e;
  border-top: 1px solid #1a1a1a;
  border-bottom: 1px solid #303030;
}

.component-head input[type="checkbox"] {
  margin: 0 6px;
}

.component-head label {
  font-weight: 600;
  color: #d8d8d8;
}

.radio-icon {
  width: 12px;
  height: 12px;
  margin-left: 7px;
  border: 1px solid #c4c4c4;
  border-radius: 50%;
  background: radial-gradient(#c4c4c4 55%, transparent 62%);
}

.head-tools {
  display: flex;
  gap: 7px;
  margin-left: auto;
}

.button-props {
  padding-top: 4px;
}

.push {
  height: 18px;
  background: #585858;
  border: 1px solid #303030;
  border-bottom-color: #242424;
  border-radius: 3px;
  color: #eee;
}

.visualize {
  width: 371px;
  margin: 1px 0 0 259px;
}

/* Event list */
.event {
  position: relative;
  margin: 10px 4px 0 18px;
}

.event-head {
  height: 20px;
  padding: 2px 7px;
  background: #353535;
  border: 1px solid #242424;
  border-radius: 3px 3px 0 0;
}

.event-body {
  display: grid;
  grid-template-columns: 186px 1fr;
  gap: 2px 4px;
  height: 57px;
  padding: 7px 6px;
  align-content: start;
  background: #4a4a4a;
  border: 1px solid #242424;
  border-top: none;
  border-radius: 0 0 3px 3px;
}

.event-foot {
  display: flex;
  justify-content: center;
  gap: 9px;
  width: 58px;
  height: 19px;
  margin: -1px 10px 0 auto;
  position: relative;
  background: #414141;
  border: 1px solid #242424;
  border-top: none;
  border-radius: 0 0 3px 3px;
}

.marker {
  position: absolute;
  left: -14px;
  top: -3px;
  width: 550px;
  height: 86px;
  border: 3px solid #fb2314;
  border-radius: 3px;
}

/* Material block */
.material {
  display: flex;
  height: 55px;
  margin-top: 10px;
  padding: 0 4px 0 6px;
  background: #3c3c3c;
  border-top: 1px solid #1a1a1a;
}

.material > .fold {
  align-self: flex-end;
  margin-bottom: 6px;
  width: 8px;
}

.material-thumb {
  width: 24px;
  height: 24px;
  margin: 10px 9px 0 6px;
  background: #fff;
}

.material-info {
  flex: 1;
  color: #7c7c7c;
}

.material-title {
  display: flex;
  align-items: center;
  gap: 2px;
  height: 26px;
  margin-right: -4px;
  padding-left: 3px;
  color: #c4c4c4;
}

.material-title span {
  flex: 1;
  font-size: 13px;
  color: #a4a4a4;
}

.shader {
  display: flex;
  align-items: center;
  gap: 4px;
  margin-top: 3px;
}

.shader label {
  width: 47px;
}

.shader .select,
.shader .push {
  background: #464646;
  border-color: #3c3c3c;
}

.shader .select select,
.shader .push {
  color: #8c8c8c;
  opacity: 1;
}

.shader .select::after {
  border-top-color: #8c8c8c;
}

.shader .push {
  width: 43px;
}

.gap-line {
  height: 12px;
  border-top: 1px solid #1a1a1a;
  border-bottom: 1px solid #1a1a1a;
}

.add-component {
  width: 229px;
  height: 24px;
  margin: 8px auto 0;
}

.scrollbar {
  width: 13px;
  display: flex;
  flex-direction: column;
  align-items: center;
  padding: 6px 0 5px;
  background: #353535;
  border-left: 1px solid #2e2e2e;
}

.scrollbar span {
  width: 9px;
  height: 415px;
  margin: auto 0 8px;
  background: #5f5f5f;
  border-radius: 5px;
}

.scrollbar i {
  width: 7px;
  height: 5px;
  background: #c4c4c4;
  clip-path: polygon(50% 0, 100% 100%, 0 100%);
}

.scrollbar .down {
  clip-path: polygon(0 0, 100% 0, 50% 100%);
}

/* Preview */
.preview-bar {
  display: flex;
  align-items: center;
  height: 22px;
  padding-left: 4px;
  background: #3c3c3c;
  border-top: 1px solid #232323;
  border-bottom: 1px solid #232323;
}

.preview-name {
  height: 20px;
  padding: 0 4px 0 3px;
  gap: 3px;
  border: 1px solid #232323;
  border-width: 0 1px;
  font-weight: 600;
  color: #d8d8d8;
}

.drag {
  flex: 1;
  height: 5px;
  margin: 0 2px 0 3px;
  border: 1px solid #5c5c5c;
  border-width: 1px 0;
}

.preview-more {
  height: 20px;
  border-left: 1px solid #232323;
}

.preview {
  display: flex;
  justify-content: center;
  height: 216px;
  padding-right: 3px;
  background: #313131;
}

.texture {
  display: grid;
  width: 217px;
  background: repeating-conic-gradient(#444 0 25%, #646464 0 50%) 12px 13px / 32px 32px;
  justify-items: center;
}

.texture > * {
  grid-area: 1 / 1;
}

.sprite {
  width: 180px;
  height: 182px;
  margin-top: 16px;
  border-radius: 52px;
  background: linear-gradient(#fff 12px, #f5f5f5 26px);
  box-shadow: 0 0 8px 4px rgba(0, 0, 0, 0.6), inset 0 0 3px 2px rgba(160, 160, 160, 0.6);
}

.borders {
  width: 217px;
  height: 216px;
}

.texture p {
  align-self: end;
  margin: 0 0 3px;
  font-weight: 600;
  line-height: 15px;
  text-align: center;
  color: #f0f0f0;
  text-shadow: 0 1px 1px #000, 0 0 2px #000, 1px 1px 1px #000;
}

.preview-foot {
  height: 7px;
  background: #3c3c3c;
  border-top: 1px solid #1a1a1a;
}

/* Status bar */
.statusbar {
  position: relative;
  display: flex;
  justify-content: flex-end;
  align-items: center;
  gap: 11px;
  height: 24px;
  padding-right: 6px;
  border-bottom: 2px solid #1c2b33;
}

.watermark {
  position: absolute;
  right: 16px;
  top: -2px;
  font-family: 'Roboto', sans-serif;
  font-size: 15px;
  line-height: 18px;
  color: #c8c8c8;
}
```
